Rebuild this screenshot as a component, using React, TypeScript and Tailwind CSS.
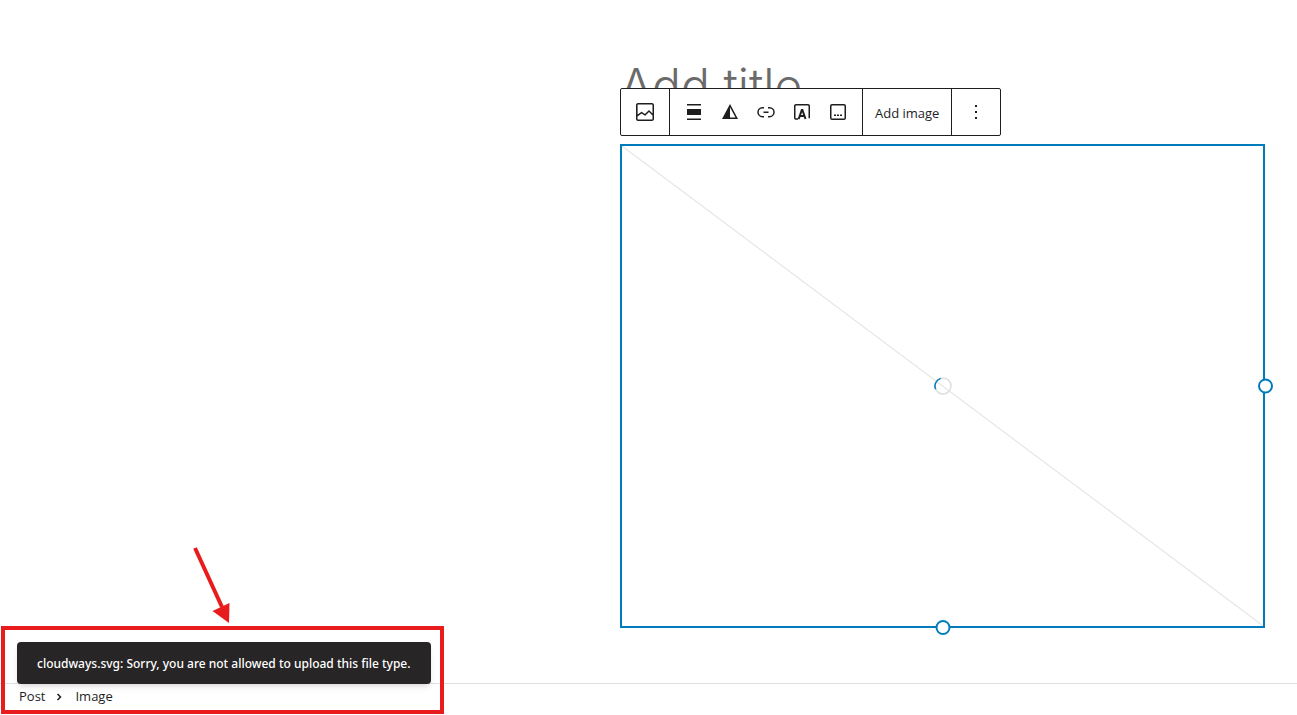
import React from "react";

function Icon({ children }: { children: React.ReactNode }) {
  return (
    <svg width="24" height="24" viewBox="0 0 24 24" fill="currentColor" aria-hidden="true">
      {children}
    </svg>
  );
}

function ToolButton({ label, children }: { label: string; children: React.ReactNode }) {
  return (
    <button type="button" aria-label={label} className="flex h-full w-9 items-center justify-center">
      {children}
    </button>
  );
}

function BlockToolbar() {
  return (
    <div
      role="toolbar"
      aria-label="Block tools"
      className="absolute -top-[58px] -left-0.5 flex h-12 divide-x divide-[#1e1e1e] rounded-xs border border-[#1e1e1e] bg-white text-[#1e1e1e]"
    >
      <div className="flex px-1.5">
        <ToolButton label="Image">
          <Icon>
            <path d="M19 3H5c-1.1 0-2 .9-2 2v14c0 1.1.9 2 2 2h14c1.1 0 2-.9 2-2V5c0-1.1-.9-2-2-2zM5 4.5h14c.3 0 .5.2.5.5v8.4l-3-2.9c-.3-.3-.8-.3-1 0L11.9 14 9 12c-.3-.2-.6-.2-.8 0l-3.6 2.6V5c-.1-.3.1-.5.4-.5zm14 15H5c-.3 0-.5-.2-.5-.5v-2.4l4.1-3 3 1.9c.3.2.7.2.9-.1L16 12l3.5 3.4V19c0 .3-.2.5-.5.5z" />
          </Icon>
        </ToolButton>
      </div>
      <div className="flex px-1.5">
        <ToolButton label="Align">
          <Icon>
            <path d="M19 5.5H5V4h14v1.5ZM19 20H5v-1.5h14V20ZM5 9h14v6H5V9Z" />
          </Icon>
        </ToolButton>
        <ToolButton label="Apply duotone filter">
          <Icon>
            <path d="M12 4 4 19h16L12 4zm0 3.2 5.5 10.3H12V7.2z" />
          </Icon>
        </ToolButton>
        <ToolButton label="Link">
          <Icon>
            <path d="M10 17.389H8.444A5.194 5.194 0 1 1 8.444 7H10v1.5H8.444a3.694 3.694 0 0 0 0 7.389H10v1.5ZM14 7h1.556a5.194 5.194 0 0 1 0 10.39H14v-1.5h1.556a3.694 3.694 0 0 0 0-7.39H14V7Zm-4.5 6h5v-1.5h-5V13Z" />
          </Icon>
        </ToolButton>
        <ToolButton label="Add text over image">
          <Icon>
            <path
              d="M8.200 19H6A1.200 1.200 0 0 1 4.750 17.800V6A1.200 1.200 0 0 1 6 4.750h12A1.200 1.200 0 0 1 19.250 6v12.200"
              fill="none"
              stroke="currentColor"
              strokeWidth="1.500"
            />
            <path
              d="M8.700 19 11.800 9.900h.6L15.500 19M9.800 16h4.600"
              fill="none"
              stroke="currentColor"
              strokeWidth="2"
            />
          </Icon>
        </ToolButton>
        <ToolButton label="Add caption">
          <Icon>
            <rect x="4.750" y="4.750" width="14.500" height="14.500" rx="1.250" fill="none" stroke="currentColor" strokeWidth="1.500" />
            <path d="M8 14.500h2V16H8zM11 14.500h2V16h-2zM14 14.500h2V16h-2z" />
          </Icon>
        </ToolButton>
      </div>
      <button type="button" className="px-3 pt-1 text-[13px]">
        Add image
      </button>
      <div className="flex px-1.5">
        <ToolButton label="Options">
          <Icon>
            <path d="M13 19h-2v-2h2v2zm0-6h-2v-2h2v2zm0-6h-2V5h2v2z" />
          </Icon>
        </ToolButton>
      </div>
    </div>
  );
}

function ImageBlock() {
  return (
    <figure className="relative aspect-[4/3] border-2 border-[#007cba] bg-white">
      <BlockToolbar />
      <svg className="h-full w-full" viewBox="0 0 641 480" preserveAspectRatio="none" aria-hidden="true">
        <path d="M0 0 641 480" stroke="#e6e6e6" strokeWidth="1.200" />
      </svg>
      <div className="absolute inset-0 flex items-center justify-center">
        <svg width="18" height="18" viewBox="0 0 18 18" fill="none" aria-label="Uploading">
          <circle cx="9" cy="9" r="8" stroke="#dddddd" strokeWidth="1.500" />
          <path d="M1.700 12.300A8 8 0 0 1 6.700 1.350" stroke="#007cba" strokeWidth="1.500" />
        </svg>
      </div>
      <button
        type="button"
        aria-label="Resize width"
        className="absolute top-1/2 -right-2.5 size-[15px] -translate-y-1/2 rounded-full border-2 border-[#007cba] bg-white"
      />
      <button
        type="button"
        aria-label="Resize height"
        className="absolute -bottom-[9px] left-1/2 size-[15px] -translate-x-1/2 rounded-full border-2 border-[#007cba] bg-white"
      />
    </figure>
  );
}

export default function App() {
  return (
    <div className="relative flex min-h-screen flex-col bg-white font-['Open_Sans','Noto_Sans',sans-serif] text-[#1e1e1e]">
      <main className="flex flex-1 justify-end pt-14 pr-8">
        <div className="w-full max-w-[645px]">
          <h1 className="mb-8 h-14 font-[Inter,sans-serif] text-5xl leading-[60px] font-light text-[#6b6b6b]">Add title</h1>
          <ImageBlock />
        </div>
      </main>

      <footer className="h-8 border-t border-[#e0e0e0] pl-[19px]">
        <nav aria-label="Block breadcrumb" className="flex h-[26px] items-center gap-2 text-[13px]">
          <a href="#post">Post</a>
          <svg width="12" height="12" viewBox="0 0 12 12" fill="none" stroke="currentColor" strokeWidth="1.500" aria-hidden="true">
            <path d="m4.500 3 3 3-3 3" />
          </svg>
          <a href="#image" className="pl-0.5">
            Image
          </a>
        </nav>
      </footer>

      <div className="pointer-events-none absolute bottom-px left-px h-[88px] w-[443px] border-4 border-[#e81c1c]" />

      <div
        role="status"
        className="absolute bottom-[31px] left-[17px] flex h-[42px] items-center rounded-sm bg-[#272526] px-5 pt-0.5 font-['Noto_Sans',sans-serif] text-xs font-medium whitespace-nowrap text-white shadow-md"
      >
        cloudways.svg: Sorry, you are not allowed to upload this file type.
      </div>

      <svg className="absolute bottom-[91px] left-[190px]" width="44" height="80" viewBox="0 0 44 80" aria-hidden="true">
        <path d="M5 4 32 63" stroke="#e81c1c" strokeWidth="4" />
        <path d="M22.500 67 39.500 59 39 79z" fill="#e81c1c" />
      </svg>
    </div>
  );
}
